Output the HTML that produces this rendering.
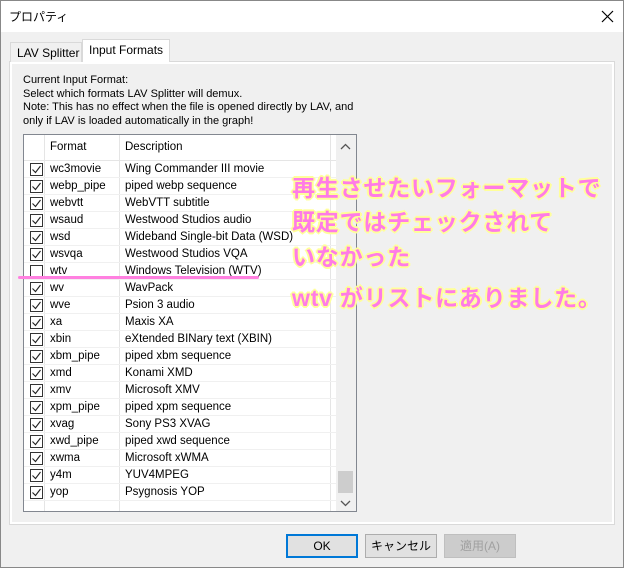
<!DOCTYPE html>
<html><head><meta charset="utf-8"><style>
*{margin:0;padding:0;box-sizing:border-box}
body{width:624px;height:568px;background:#f0f0f0;font-family:"Liberation Sans","Noto Sans CJK JP",sans-serif;font-size:11.5px;color:#000;position:relative;overflow:hidden}
.abs{position:absolute}
#win{left:0;top:0;width:624px;height:568px;border:1px solid #888}
#title{left:1px;top:1px;width:622px;height:31px;background:#fff}
.tab{border:1px solid #d9d9d9;border-bottom:none;background:#f0f0f0;padding:3px 6px;font-size:12px;white-space:nowrap;line-height:15px}
#panel{left:9px;top:61px;width:606px;height:464px;border:1px solid #d9d9d9;background:#fff}
#panelin{left:12px;top:64px;width:600px;height:458px;background:#f0f0f0}
#list{left:23px;top:134px;width:334px;height:378px;border:1px solid #828790;background:#fff;overflow:hidden}
.row{position:absolute;left:0;height:17px;width:312px;border-bottom:1px solid #f0f0f0}
.row span{position:absolute;top:2px;white-space:nowrap}
.cb{position:absolute;left:6px;top:2px;width:13px;height:13px;border:1px solid #333;background:#fff}
.btn{position:absolute;top:534px;height:24px;border:1px solid #adadad;background:#e1e1e1;text-align:center;line-height:22px;font-size:12px}
.ov{position:absolute;left:292px;font-size:23px;line-height:28px;font-weight:bold;letter-spacing:0.8px;color:#ff7be6;text-shadow:-1px -1px 0 #ffff9a,1px -1px 0 #ffff9a,-1px 1px 0 #ffff9a,1px 1px 0 #ffff9a,0 2px 0 #ffff9a,2px 0 0 #ffff9a,-2px 0 0 #ffff9a,0 -2px 0 #ffff9a;white-space:nowrap}
</style></head><body>
<div id="win" class="abs"></div>
<div id="title" class="abs"><span class="abs" style="left:8px;top:7px;font-size:12px">プロパティ</span>
<svg class="abs" style="left:600px;top:9px" width="13" height="13"><path d="M1 1L12 12M12 1L1 12" stroke="#000" stroke-width="1.2"/></svg></div>
<div id="panel" class="abs"></div>
<div id="panelin" class="abs"></div>
<div class="abs tab" style="left:10px;top:42px;height:20px;width:72px;padding-top:3px">LAV Splitter</div>
<div class="abs tab" style="left:82px;top:39px;height:23px;width:88px;background:#fff;padding-top:3px">Input Formats</div>
<div class="abs" style="left:23px;top:74px;line-height:13.5px;font-size:11px;white-space:nowrap">Current Input Format:<br>Select which formats LAV Splitter will demux.<br>Note: This has no effect when the file is opened directly by LAV, and<br>only if LAV is loaded automatically in the graph!</div>
<div id="list" class="abs">
<div class="abs" style="left:0;top:0;width:312px;height:26px;border-bottom:1px solid #e5e5e5">
<span class="abs" style="left:26px;top:6px">Format</span><span class="abs" style="left:101px;top:6px">Description</span></div>
<div class="abs" style="left:20px;top:0;width:1px;height:378px;background:#e5e5e5"></div>
<div class="abs" style="left:95px;top:0;width:1px;height:378px;background:#e5e5e5"></div>
<div class="abs" style="left:306px;top:0;width:1px;height:378px;background:#e5e5e5"></div>
<div id="rows"></div>
<div class="abs" style="left:312px;top:0;width:20px;height:376px;background:#f0f0f0"></div>
<div class="abs" style="left:314px;top:336px;width:15px;height:22px;background:#cdcdcd"></div>
<svg class="abs" style="left:316px;top:8px" width="11" height="8"><path d="M1 6L5.5 1.5L10 6" stroke="#555" fill="none" stroke-width="1.3"/></svg>
<svg class="abs" style="left:316px;top:364px" width="11" height="8"><path d="M1 2L5.5 6.5L10 2" stroke="#555" fill="none" stroke-width="1.3"/></svg>
</div>
<div class="abs" style="left:18px;top:276px;width:241px;height:3px;border-radius:2px;background:#ff80e0"></div>
<div class="ov" style="top:174px">再生させたいフォーマットで</div>
<div class="ov" style="top:208px">既定ではチェックされて</div>
<div class="ov" style="top:243px">いなかった</div>
<div class="ov" style="top:284px">wtv がリストにありました。</div>
<div class="btn" style="left:286px;width:72px;border:2px solid #0078d7;line-height:20px">OK</div>
<div class="btn" style="left:365px;width:72px">キャンセル</div>
<div class="btn" style="left:444px;width:72px;color:#a0a0a0;border-color:#bfbfbf;background:#ccc">適用(A)</div>
<script>
var d=[["wc3movie","Wing Commander III movie"],["webp_pipe","piped webp sequence"],["webvtt","WebVTT subtitle"],["wsaud","Westwood Studios audio"],["wsd","Wideband Single-bit Data (WSD)"],["wsvqa","Westwood Studios VQA"],["wtv","Windows Television (WTV)"],["wv","WavPack"],["wve","Psion 3 audio"],["xa","Maxis XA"],["xbin","eXtended BINary text (XBIN)"],["xbm_pipe","piped xbm sequence"],["xmd","Konami XMD"],["xmv","Microsoft XMV"],["xpm_pipe","piped xpm sequence"],["xvag","Sony PS3 XVAG"],["xwd_pipe","piped xwd sequence"],["xwma","Microsoft xWMA"],["y4m","YUV4MPEG"],["yop","Psygnosis YOP"]];
var h="";d.forEach(function(r,i){var ck=r[0]=="wtv"?"":'<svg style="position:absolute;left:0;top:0" width="11" height="11"><path d="M1.5 5.5L4.5 8.5L9.5 2" stroke="#222" fill="none" stroke-width="1.1"/></svg>';
h+='<div class="row" style="top:'+(26+i*17)+'px"><div class="cb">'+ck+'</div><span style="left:26px">'+r[0]+'</span><span style="left:101px">'+r[1]+'</span></div>';});
document.getElementById("rows").innerHTML=h;
</script>
</body></html>
